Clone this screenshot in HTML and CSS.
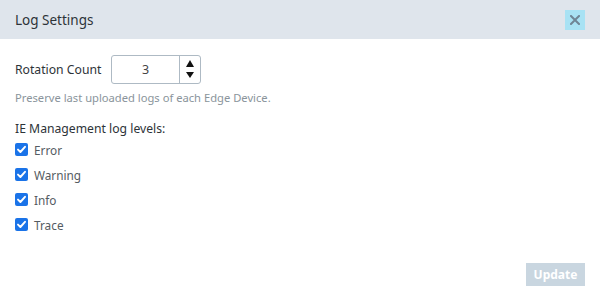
FILE: index.html
```html
<!DOCTYPE html>
<html>
<head>
<meta charset="utf-8">
<link rel="stylesheet" href="styles.css">
</head>
<body>
<div class="dialog">
  <div class="header">
    <div class="title">Log Settings</div>
    <button class="close" aria-label="Close">
      <svg width="10" height="10" viewBox="0 0 10 10"><path d="M1 1L9 9M9 1L1 9" stroke="#6f8595" stroke-width="2" stroke-linecap="square"/></svg>
    </button>
  </div>
  <div class="body">
    <div class="row">
      <span class="label">Rotation Count</span>
      <div class="spin">
        <span class="value">3</span>
        <div class="arrows">
          <svg width="8" height="7" viewBox="0 0 8 7"><path d="M4 0L8 7H0Z" fill="#111"/></svg>
          <svg width="8" height="6" viewBox="0 0 8 6"><path d="M0 0H8L4 6Z" fill="#111"/></svg>
        </div>
      </div>
    </div>
    <div class="hint">Preserve last uploaded logs of each Edge Device.</div>
    <div class="section">IE Management log levels:</div>
    <ul class="checks">
      <li><span class="cb"><svg width="11" height="11" viewBox="0 0 11 11"><path d="M2 5.6L4.4 8L9 2.8" stroke="#fff" stroke-width="1.9" fill="none" stroke-linecap="round" stroke-linejoin="round"/></svg></span>Error</li>
      <li><span class="cb"><svg width="11" height="11" viewBox="0 0 11 11"><path d="M2 5.6L4.4 8L9 2.8" stroke="#fff" stroke-width="1.9" fill="none" stroke-linecap="round" stroke-linejoin="round"/></svg></span>Warning</li>
      <li><span class="cb"><svg width="11" height="11" viewBox="0 0 11 11"><path d="M2 5.6L4.4 8L9 2.8" stroke="#fff" stroke-width="1.9" fill="none" stroke-linecap="round" stroke-linejoin="round"/></svg></span>Info</li>
      <li><span class="cb"><svg width="11" height="11" viewBox="0 0 11 11"><path d="M2 5.6L4.4 8L9 2.8" stroke="#fff" stroke-width="1.9" fill="none" stroke-linecap="round" stroke-linejoin="round"/></svg></span>Trace</li>
    </ul>
  </div>
  <div class="footer">
    <button class="update">Update</button>
  </div>
</div>
</body>
</html>
```
FILE: styles.css
```css
html, body { margin: 0; padding: 0; background: #fff; }
body { font-family: "Noto Sans", "Open Sans", sans-serif; color: #2d3338; }
.dialog { width: 600px; height: 293px; display: flex; flex-direction: column; }
.header {
  height: 39px; background: #dfe5ec; display: flex; align-items: center;
  justify-content: space-between; padding: 0 15px; box-sizing: border-box;
}
.title { font-size: 13.5px; color: #2d3338; }
.close {
  width: 20px; height: 20px; border: 0; padding: 0; margin: 0;
  background: #a8e2f4; display: flex; align-items: center; justify-content: center;
}
.body { padding: 15px 15px 0; flex: 1; }
.row { display: flex; align-items: center; height: 30px; }
.label { font-size: 12.2px; width: 96px; }
.spin {
  width: 90px; height: 29px; box-sizing: border-box; border: 1px solid #aebac4;
  border-radius: 3px; display: flex;
}
.value { flex: 1; text-align: center; font-size: 12.5px; line-height: 27px; color: #444; }
.arrows {
  width: 20px; border-left: 1px solid #aebac4; display: flex; flex-direction: column;
  align-items: center; justify-content: center; gap: 5px;
}
.arrows svg { display: block; }
.hint { font-size: 11.2px; color: #8a949b; margin-top: 6px; }
.section { font-size: 12.2px; margin-top: 15px; }
.checks { list-style: none; margin: 0; padding: 0; }
.checks li { display: flex; align-items: center; height: 25px; font-size: 11.8px; color: #555c62; }
.cb {
  width: 13px; height: 13px; background: #1a73e8; border-radius: 2px;
  display: flex; align-items: center; justify-content: center; margin-right: 6px;
}
.cb svg { display: block; }
.footer { display: flex; justify-content: flex-end; padding: 0 15px 7px; }
.update {
  width: 59px; height: 23px; border: 0; background: #c9d6e0; color: #fff;
  font-family: "Noto Sans", sans-serif; font-weight: bold; font-size: 12px; padding: 0;
}
```
